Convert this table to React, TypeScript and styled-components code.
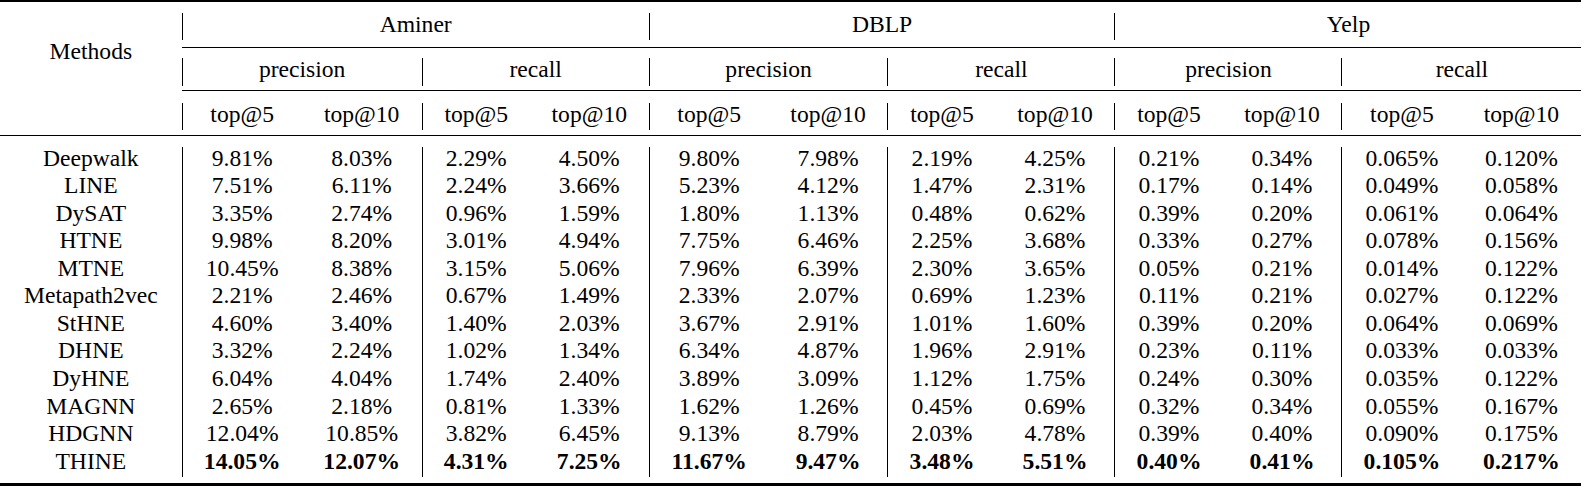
import React from 'react';
import styled, { createGlobalStyle } from 'styled-components';

const Global = createGlobalStyle`
  html, body { margin: 0; padding: 0; background: #fff; }
  body {
    width: 1586px;
    height: 488px;
    overflow: hidden;
    font-family: "Liberation Serif", "Times New Roman", serif;
  }
`;

const COLS = [181.7, 120, 120, 108.2, 118.8, 120, 118.8, 108.2, 118.8, 108.2, 118.8, 120, 120];
const ROW_H = 27.57;
const TRACKS = [
  '2.4px', '10.3px', `${ROW_H}px`, '6.9px', '1px', '10.1px', `${ROW_H}px`, '4.3px', '1px', '11.5px',
  `${ROW_H}px`, '4.4px', '1.2px', '10.8px', `repeat(12, ${ROW_H}px)`, '5.8px', '3.3px',
].join(' ');

const Table = styled.div`
  display: grid;
  grid-template-columns: ${COLS.map((c) => `${c}px`).join(' ')};
  grid-template-rows: ${TRACKS};
  color: #000;
`;

const Rule = styled.div<{ $row: number; $from: number }>`
  grid-row: ${(p) => p.$row};
  grid-column: ${(p) => p.$from} / 14;
  background: #000;
`;

const Cell = styled.div<{ $row: string; $col: string; $bar?: boolean; $bold?: boolean }>`
  grid-row: ${(p) => p.$row};
  grid-column: ${(p) => p.$col};
  box-sizing: border-box;
  font-family: "Liberation Serif", "Times New Roman", serif;
  font-size: 23.6px;
  text-align: center;
  white-space: nowrap;
  line-height: 22.66px;
  border-left: ${(p) => (p.$bar ? '1px solid #000' : '0')};
  font-weight: ${(p) => (p.$bold ? 700 : 400)};
`;

const MethodsCell = styled(Cell)`
  padding-top: ${ROW_H}px;
`;

type Row = { name: string; values: string[]; bold?: boolean };

const ROWS: Row[] = [
  { name: 'Deepwalk', values: ['9.81%', '8.03%', '2.29%', '4.50%', '9.80%', '7.98%', '2.19%', '4.25%', '0.21%', '0.34%', '0.065%', '0.120%'] },
  { name: 'LINE', values: ['7.51%', '6.11%', '2.24%', '3.66%', '5.23%', '4.12%', '1.47%', '2.31%', '0.17%', '0.14%', '0.049%', '0.058%'] },
  { name: 'DySAT', values: ['3.35%', '2.74%', '0.96%', '1.59%', '1.80%', '1.13%', '0.48%', '0.62%', '0.39%', '0.20%', '0.061%', '0.064%'] },
  { name: 'HTNE', values: ['9.98%', '8.20%', '3.01%', '4.94%', '7.75%', '6.46%', '2.25%', '3.68%', '0.33%', '0.27%', '0.078%', '0.156%'] },
  { name: 'MTNE', values: ['10.45%', '8.38%', '3.15%', '5.06%', '7.96%', '6.39%', '2.30%', '3.65%', '0.05%', '0.21%', '0.014%', '0.122%'] },
  { name: 'Metapath2vec', values: ['2.21%', '2.46%', '0.67%', '1.49%', '2.33%', '2.07%', '0.69%', '1.23%', '0.11%', '0.21%', '0.027%', '0.122%'] },
  { name: 'StHNE', values: ['4.60%', '3.40%', '1.40%', '2.03%', '3.67%', '2.91%', '1.01%', '1.60%', '0.39%', '0.20%', '0.064%', '0.069%'] },
  { name: 'DHNE', values: ['3.32%', '2.24%', '1.02%', '1.34%', '6.34%', '4.87%', '1.96%', '2.91%', '0.23%', '0.11%', '0.033%', '0.033%'] },
  { name: 'DyHNE', values: ['6.04%', '4.04%', '1.74%', '2.40%', '3.89%', '3.09%', '1.12%', '1.75%', '0.24%', '0.30%', '0.035%', '0.122%'] },
  { name: 'MAGNN', values: ['2.65%', '2.18%', '0.81%', '1.33%', '1.62%', '1.26%', '0.45%', '0.69%', '0.32%', '0.34%', '0.055%', '0.167%'] },
  { name: 'HDGNN', values: ['12.04%', '10.85%', '3.82%', '6.45%', '9.13%', '8.79%', '2.03%', '4.78%', '0.39%', '0.40%', '0.090%', '0.175%'] },
  { name: 'THINE', bold: true, values: ['14.05%', '12.07%', '4.31%', '7.25%', '11.67%', '9.47%', '3.48%', '5.51%', '0.40%', '0.41%', '0.105%', '0.217%'] },
];

const DATASETS = ['Aminer', 'DBLP', 'Yelp'];
const METRICS = ['precision', 'recall'];
const TOPS = ['top@5', 'top@10'];

const H1 = 3;
const H2 = 7;
const H3 = 11;
const DATA = 15;

export default function App() {
  return (
    <>
      <Global />
      <Table>
        <Rule $row={1} $from={1} />
        <MethodsCell $row={`${H1} / ${H3 + 1}`} $col="1">Methods</MethodsCell>
        {DATASETS.map((d, i) => (
          <Cell key={d} $row={`${H1}`} $col={`${2 + i * 4} / span 4`} $bar>
            {d}
          </Cell>
        ))}
        <Rule $row={5} $from={2} />
        {DATASETS.flatMap((d, i) =>
          METRICS.map((m, j) => (
            <Cell key={`${d}-${m}`} $row={`${H2}`} $col={`${2 + i * 4 + j * 2} / span 2`} $bar>
              {m}
            </Cell>
          ))
        )}
        <Rule $row={9} $from={2} />
        {Array.from({ length: 12 }).map((_, k) => (
          <Cell key={`top-${k}`} $row={`${H3}`} $col={`${2 + k}`} $bar={k % 2 === 0}>
            {TOPS[k % 2]}
          </Cell>
        ))}
        <Rule $row={13} $from={1} />
        {ROWS.map((r, ri) => (
          <React.Fragment key={r.name}>
            <Cell $row={`${DATA + ri}`} $col="1">
              {r.name}
            </Cell>
            {r.values.map((v, k) => (
              <Cell key={k} $row={`${DATA + ri}`} $col={`${2 + k}`} $bar={k % 2 === 0} $bold={r.bold}>
                {v}
              </Cell>
            ))}
          </React.Fragment>
        ))}
        <Rule $row={28} $from={1} />
      </Table>
    </>
  );
}
